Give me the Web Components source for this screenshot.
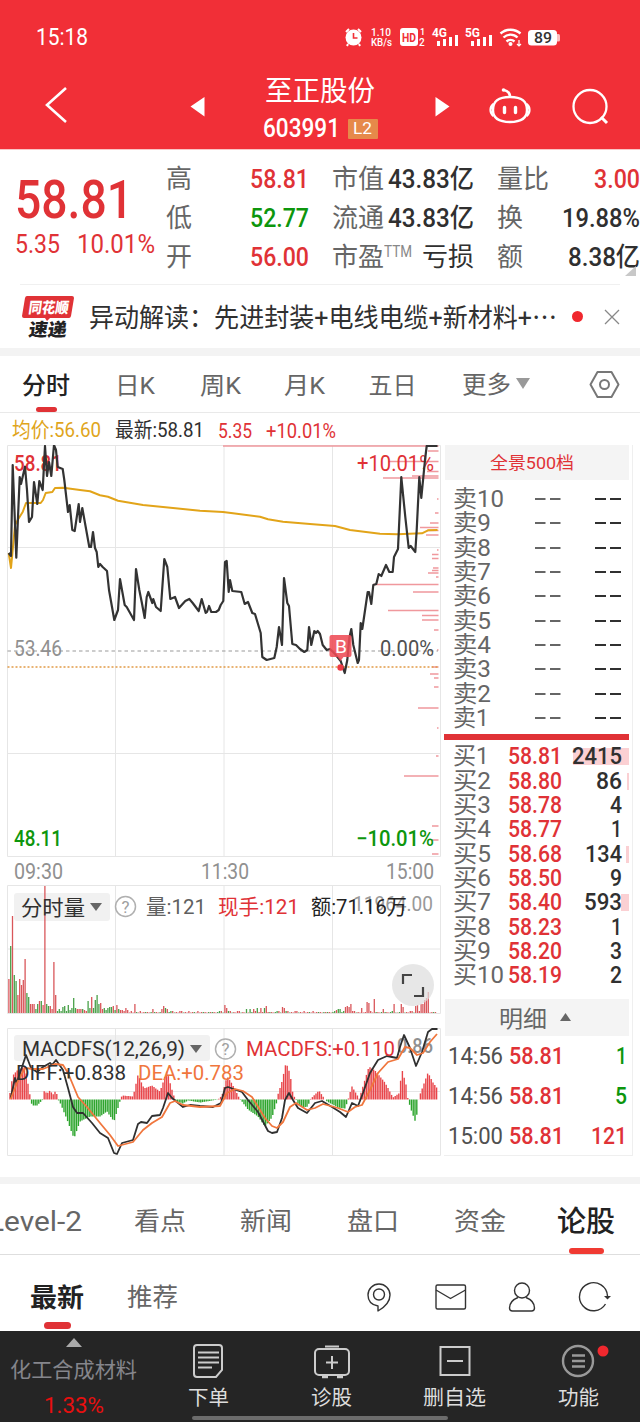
<!DOCTYPE html>
<html lang="zh-CN">
<head>
<meta charset="utf-8">
<title>至正股份 603991</title>
<style>
    body {
        margin: 0;
        width: 640px;
        background: #fff;
        color: #303030;
        font-family: Roboto, "Noto Sans CJK SC", sans-serif;
        overflow-x: hidden;
    }
</style>
</head>
<body>
<stock-page></stock-page>

<template id="page-tmpl">
    <style>
        :host {
            display: block;
            width: 640px;
            height: 1422px;
            overflow: hidden;
        }

        .split {
            height: 8px;
            background: #f3f3f3;
        }

        .split--low {
            height: 7px;
            margin-top: 21px;
        }

        .main {
            display: grid;
            grid-template-columns: 444px 189px;
            height: 743px;
        }

        .main order-book {
            border-right: 1px solid #efefef;
            margin-top: 32px;
        }
    </style>
    <stock-header></stock-header>
    <quote-panel></quote-panel>
    <news-bar></news-bar>
    <div class="split"></div>
    <period-tabs></period-tabs>
    <div class="main">
        <chart-stack></chart-stack>
        <order-book></order-book>
    </div>
    <div class="split split--low"></div>
    <section-tabs></section-tabs>
    <post-filter></post-filter>
    <bottom-nav></bottom-nav>
</template>

<template id="header-tmpl">
    <style>
        :host {
            display: block;
            height: 149px;
            background: #f12f37;
            border-bottom: 1px solid #f9c5c5;
            color: #fff;
        }

        .status {
            display: flex;
            height: 74px;
            align-items: center;
            padding-left: 36px;
        }

        .status svg {
            margin-left: 256px;
        }

        .nav {
            display: grid;
            grid-template-columns: 168px 60px 184px 60px 80px 88px;
            height: 75px;
        }

        .nav > svg {
            display: block;
        }

        .title {
            display: flex;
            flex-direction: column;
            align-items: center;
            padding-top: 4px;
        }

        .code {
            display: flex;
            align-items: center;
            gap: 8px;
            margin-top: 10px;
        }

        .l2 {
            display: flex;
            justify-content: center;
            width: 30px;
            height: 20px;
            align-items: center;
            background: #e6894a;
            border-radius: 1px;
        }
    </style>
    <div class="status">
        <fit-text w="52" size="23">15:18</fit-text>
        <svg width="218" height="24" viewBox="344 25 218 24" fill="#fff" font-family="Roboto" font-weight="500">
            <circle cx="353.500" cy="37.500" r="8"/>
            <path d="M346 32l3-3M361 32l-3-3M348 44l-1 2M359 44l1 2" stroke="#fff" stroke-width="2"/>
            <path d="M353.500 33v5h4" fill="none" stroke="#f12f37" stroke-width="1.600"/>
            <text x="371" y="36" font-size="10" textLength="20" lengthAdjust="spacingAndGlyphs">1.10</text>
            <text x="371" y="46" font-size="10" textLength="21" lengthAdjust="spacingAndGlyphs">KB/s</text>
            <rect x="400" y="28" width="18" height="18" rx="3"/>
            <text x="402" y="42" font-size="12" font-weight="700" fill="#f12f37" textLength="14" lengthAdjust="spacingAndGlyphs">HD</text>
            <text x="420" y="35" font-size="9">1</text>
            <text x="419" y="46" font-size="10">2</text>
            <text x="432" y="37" font-size="12" font-weight="700" textLength="15" lengthAdjust="spacingAndGlyphs">4G</text>
            <path d="M437 41h3v5h-3zM443 39h3v7h-3zM449 37h3v9h-3zM455 35h3v11h-3z"/>
            <text x="465" y="37" font-size="12" font-weight="700" textLength="15" lengthAdjust="spacingAndGlyphs">5G</text>
            <path d="M471 41h3v5h-3zM477 39h3v7h-3zM483 37h3v9h-3zM489 35h3v11h-3z"/>
            <path d="M500.500 33.500a15 15 0 0 1 20 0M503.500 37.500a10 10 0 0 1 14 0M506.500 41.500a6 6 0 0 1 8 0" fill="none" stroke="#fff" stroke-width="2.400"/>
            <circle cx="510.500" cy="44" r="2"/>
            <path d="M519 40v6M517 44l2 2 2-2" fill="none" stroke="#fff" stroke-width="1.200"/>
            <rect x="528" y="30" width="29" height="15.500" rx="3.500"/>
            <rect x="556" y="34" width="4" height="7.500" rx="1.500" opacity=".7"/>
            <text x="534" y="43" font-size="15" fill="#333" textLength="18" lengthAdjust="spacingAndGlyphs">89</text>
        </svg>
    </div>
    <div class="nav">
        <svg width="168" height="75" viewBox="0 74 168 75"><path d="M66 88L47 105l19 17" fill="none" stroke="#fff" stroke-width="2.600"/></svg>
        <svg width="60" height="75" viewBox="168 74 60 75"><path d="M204.500 97v19.500L190.500 106.500z" fill="#fff"/></svg>
        <div class="title">
            <fit-text w="110" size="28">至正股份</fit-text>
            <div class="code">
                <fit-text w="77" size="25" weight="500">603991</fit-text>
                <span class="l2"><fit-text w="19" size="17">L2</fit-text></span>
            </div>
        </div>
        <svg width="60" height="75" viewBox="412 74 60 75"><path d="M435.500 97v19.500L449.500 106.500z" fill="#fff"/></svg>
        <svg width="80" height="75" viewBox="472 74 80 75" fill="none" stroke="#fff" stroke-width="2.400">
            <path d="M510 97c-13 0-17 5-17 13s5 12 17 12 17-4 17-12-4-13-17-13z"/>
            <path d="M493.500 104c-4 3-4 9 0 12M526.500 104c4 3 4 9 0 12" stroke-width="2.200"/>
            <path d="M510 97c0-4-2-6-6-7" stroke-width="2.600"/>
            <circle cx="503.500" cy="90" r="1.800" fill="#fff" stroke="none"/>
            <path d="M504.500 107.500v5M515.500 107.500v5" stroke-width="3.400" stroke-linecap="round"/>
        </svg>
        <svg width="88" height="75" viewBox="552 74 88 75" fill="none" stroke="#fff" stroke-width="2.300">
            <circle cx="590" cy="106.500" r="16.500"/>
            <path d="M601 117l6 6" stroke-width="3"/>
        </svg>
    </div>
</template>

<template id="quote-tmpl">
    <style>
        :host {
            display: grid;
            grid-template-columns: 166px 166px 165px 143px;
            height: 134px;
            position: relative;
        }

        .price {
            padding: 23px 0 0 15px;
        }

        .price fit-text {
            display: block;
        }

        .change {
            display: flex;
            gap: 17px;
            margin-top: 4px;
        }

        .col {
            display: grid;
            grid-template-rows: repeat(3, 39px);
            align-items: center;
            padding-top: 9px;
        }

        .row {
            display: flex;
            justify-content: space-between;
        }

        .row span {
            display: flex;
            align-items: flex-start;
        }

        .a { padding-right: 23px; }
        .b { padding-right: 23px; }

        .corner {
            position: absolute;
            right: 4px;
            bottom: 8px;
        }
    </style>
    <div class="price">
        <fit-text w="118" size="54" weight="500" color="#e03236">58.81</fit-text>
        <div class="change">
            <fit-text w="45" size="26" color="#e03236">5.35</fit-text>
            <fit-text w="78" size="26" color="#e03236">10.01%</fit-text>
        </div>
    </div>
    <div class="col a"></div>
    <div class="col b"></div>
    <div class="col c"></div>
    <svg class="corner" width="11" height="10"><path d="M11 0v10H0z" fill="#c8c8c8"/></svg>
</template>

<template id="news-tmpl">
    <style>
        :host {
            display: flex;
            height: 63px;
            align-items: center;
            margin: 0 20px;
            border-top: 1px solid #f0f0f0;
        }

        .logo {
            margin: 1px 15px 0 2px;
            flex: none;
        }

        .headline {
            margin-top: 3px;
        }

        .dot {
            width: 11px;
            height: 11px;
            border-radius: 50%;
            background: #f0282e;
            margin: 0 21px 0 15px;
        }
    </style>
    <svg class="logo" width="52" height="46" viewBox="22 293 52 46" font-family="Noto Sans CJK SC" font-weight="900">
        <path d="M27 295h45q2 0 2 2l-3 18q-.500 2-2 2H50l-3 3-2-3H24q-2 0-2-2l3-18q.500-2 2-2z" fill="#e03236"/>
        <text transform="translate(28 312) skewX(-8)" font-size="15" fill="#fff" textLength="40" lengthAdjust="spacingAndGlyphs">同花顺</text>
        <text transform="translate(28 335) skewX(-8)" font-size="18" fill="#222" textLength="38" lengthAdjust="spacingAndGlyphs">速递</text>
    </svg>
    <fit-text class="headline" w="468" size="26">异动解读：先进封装+电线电缆+新材料+⋯</fit-text>
    <div class="dot"></div>
    <svg width="16" height="16"><path d="M1 1l14 14M15 1L1 15" stroke="#888" stroke-width="1.300"/></svg>
</template>

<template id="period-tmpl">
    <style>
        :host {
            display: grid;
            grid-template-columns: 92px 86px 84px 85px 91px 130px 72px;
            height: 56px;
            border-bottom: 1px solid #e9e9e9;
        }

        .tab {
            display: flex;
            flex-direction: column;
            align-items: center;
            padding-top: 18px;
            box-sizing: border-box;
        }

        .mark {
            width: 21px;
            height: 5px;
            border-radius: 3px;
            background: #e03236;
            margin-top: 9px;
        }

        .more {
            display: flex;
            align-items: center;
            justify-content: center;
            gap: 5px;
            padding: 2px 14px 0 0;
        }

        .more svg {
            margin-top: -3px;
        }
    </style>
    <div class="tab"><fit-text w="48" size="24" weight="500" color="#222">分时</fit-text><i class="mark"></i></div>
    <div class="tab"><fit-text w="40" size="24" color="#666">日K</fit-text></div>
    <div class="tab"><fit-text w="41" size="24" color="#666">周K</fit-text></div>
    <div class="tab"><fit-text w="41" size="24" color="#666">月K</fit-text></div>
    <div class="tab"><fit-text w="48" size="24" color="#666">五日</fit-text></div>
    <div class="more">
        <fit-text w="49" size="24" color="#666">更多</fit-text>
        <svg width="14" height="11"><path d="M0 0h14L7 11z" fill="#999"/></svg>
    </div>
    <svg width="72" height="56" viewBox="568 356 72 56" fill="none" stroke="#777" stroke-width="2">
        <path d="M597.500 372h14l7 12.500-7 12.500h-14l-7-12.500z" stroke-linejoin="round"/>
        <circle cx="604.500" cy="384.500" r="4.500"/>
    </svg>
</template>

<template id="charts-tmpl">
    <style>
        :host {
            display: block;
        }

        .legend {
            display: flex;
            height: 32px;
            align-items: center;
            padding: 3px 0 0 12px;
            box-sizing: border-box;
        }

        .legend fit-text + fit-text { margin-left: 14px; }

        .times {
            display: flex;
            justify-content: space-between;
            height: 28px;
            align-items: center;
            padding: 2px 10px 0 14px;
            box-sizing: border-box;
        }

        svg {
            display: block;
        }

        macd-chart {
            margin-top: 14px;
        }
    </style>
    <div class="legend">
        <fit-text w="89" size="21" color="#e0a51c">均价:56.60</fit-text>
        <fit-text w="89" size="21" color="#303030">最新:58.81</fit-text>
        <fit-text w="34" size="20" color="#e03236">5.35</fit-text>
        <fit-text w="70" size="20" color="#e03236">+10.01%</fit-text>
    </div>
    <price-chart></price-chart>
    <div class="times">
        <fit-text w="49" size="22" color="#909090">09:30</fit-text>
        <fit-text w="48" size="22" color="#909090">11:30</fit-text>
        <fit-text w="48" size="22" color="#909090">15:00</fit-text>
    </div>
    <volume-chart></volume-chart>
    <macd-chart></macd-chart>
</template>

<template id="book-tmpl">
    <style>
        :host {
            display: block;
            height: 710px;
            border-bottom: 1px solid #efefef;
        }

        .head {
            display: flex;
            align-items: center;
            justify-content: center;
            width: 185px;
            height: 35px;
            padding: 2px 10px 0 0;
            background: #f4f4f4;
            border-left: 1px solid #fff;
            box-sizing: border-box;
            gap: 13px;
        }

        .head--ticks {
            height: 37px;
            margin-top: 11px;
            padding: 4px 4px 0 0;
        }

        .head--ticks svg {
            margin-top: -4px;
        }

        .asks {
            padding-top: 7px;
        }

        .line {
            display: grid;
            grid-template-columns: 55px 54px 1fr;
            align-items: center;
            width: 185px;
            height: 24.330px;
            padding-left: 9px;
            padding-right: 7px;
            box-sizing: border-box;
            position: relative;
        }

        .line > :last-child {
            justify-self: end;
        }

        /* quantity bar behind the number */
        .line .bar {
            position: absolute;
            right: 0;
            top: 4px;
            height: 17px;
            background: #fbd0d3;
            z-index: -1;
        }

        .rule {
            height: 6px;
            width: 185px;
            background: #e03236;
            margin: 4px 0;
        }

        .ticks {
            padding-top: 1px;
        }

        .tick {
            display: grid;
            grid-template-columns: 61px 60px 1fr;
            align-items: center;
            width: 183px;
            height: 39.700px;
            padding-left: 4px;
            box-sizing: border-box;
        }

        .tick > :last-child {
            justify-self: end;
        }
    </style>
    <div class="head"><fit-text w="84" size="17" color="#e03236">全景500档</fit-text></div>
    <div class="asks"></div>
    <div class="rule"></div>
    <div class="bids"></div>
    <div class="head head--ticks">
        <fit-text w="48" size="23" color="#666">明细</fit-text>
        <svg width="11" height="8"><path d="M5.500 0L11 8H0z" fill="#666"/></svg>
    </div>
    <div class="ticks"></div>
</template>

<template id="sections-tmpl">
    <style>
        :host {
            display: flex;
            height: 71px;
            border-bottom: 1px solid #dedede;
            box-sizing: border-box;
        }

        .tab {
            display: flex;
            flex-direction: column;
            align-items: center;
            width: 106.600px;
            flex: none;
            padding-top: 25px;
            box-sizing: border-box;
        }

        /* scrolled partly out on the left */
        .tab--cut {
            align-items: flex-end;
            padding-right: 25px;
        }

        .tab--on { padding-top: 24px; }

        .mark {
            width: 35px;
            height: 7px;
            border-radius: 4px;
            background: #f03a32;
            margin-top: 11px;
        }
    </style>
    <div class="tab tab--cut"><fit-text w="94" size="27" color="#666">Level-2</fit-text></div>
    <div class="tab"><fit-text w="52" size="25" color="#666">看点</fit-text></div>
    <div class="tab"><fit-text w="52" size="25" color="#666">新闻</fit-text></div>
    <div class="tab"><fit-text w="52" size="25" color="#666">盘口</fit-text></div>
    <div class="tab"><fit-text w="52" size="25" color="#666">资金</fit-text></div>
    <div class="tab tab--on"><fit-text w="58" size="29" weight="500" color="#222">论股</fit-text><i class="mark"></i></div>
</template>

<template id="filter-tmpl">
    <style>
        :host {
            display: flex;
            justify-content: space-between;
            height: 76px;
            box-sizing: border-box;
        }

        .tabs {
            display: flex;
            gap: 43px;
            padding: 30px 0 0 30px;
        }

        .on {
            display: flex;
            flex-direction: column;
            align-items: center;
        }

        .mark {
            width: 27px;
            height: 7px;
            border-radius: 4px;
            background: #e03236;
            margin-top: 11px;
        }
    </style>
    <div class="tabs">
        <div class="on"><fit-text w="54" size="26" weight="700" color="#222">最新</fit-text><i class="mark"></i></div>
        <fit-text w="51" size="25" color="#666">推荐</fit-text>
    </div>
    <svg width="290" height="76" viewBox="350 1255 290 76" fill="none" stroke="#333" stroke-width="1.400" stroke-linejoin="round">
        <path d="M378 1311v-5c-6-1-10-5-10-11a11 11 0 0 1 22 0c0 6-5 12-12 16z"/>
        <circle cx="379" cy="1294.500" r="5.500"/>
        <rect x="436" y="1285" width="29.500" height="24" rx="1.500"/>
        <path d="M436 1290l14.500 8.500 15-8.500"/>
        <ellipse cx="522" cy="1290.500" rx="7.500" ry="7.500"/>
        <path d="M518 1297.500c-5 2-8.500 6-8.500 10.500q0 3 3 3h19q3 0 3-3c0-4.500-3.500-8.500-8.500-10.500"/>
        <path d="M605.500 1304a14 14 0 1 1 2-8"/>
        <path d="M604 1296h7l-3.500 3.500z" fill="#333" stroke="none"/>
    </svg>
</template>

<template id="nav-tmpl">
    <style>
        :host {
            display: grid;
            grid-template-columns: 147px 123px 123px 123px 124px;
            height: 91px;
            background: #252525;
            position: relative;
        }

        .sector, .item {
            display: flex;
            flex-direction: column;
            align-items: center;
        }

        .sector {
            padding-top: 7px;
        }

        .sector fit-text:nth-of-type(1) { margin-top: 13px; }
        .sector fit-text:nth-of-type(2) { margin-top: 14px; }

        .item {
            padding-top: 12px;
            gap: 9px;
        }

        .item svg {
            overflow: visible;
        }

        .home {
            position: absolute;
            left: 192px;
            bottom: 2px;
            width: 256px;
            height: 4px;
            border-radius: 2px;
            background: #6c6c6c;
        }
    </style>
    <div class="sector">
        <svg width="16" height="9"><path d="M8 0l8 9H0z" fill="#aaa"/></svg>
        <fit-text w="127" size="21" color="#85868c">化工合成材料</fit-text>
        <fit-text w="60" size="22" color="#e80f0f">1.33%</fit-text>
    </div>
    <div class="item">
        <svg width="36" height="36" fill="none" stroke="#ccc" stroke-width="2">
            <path d="M6 2h22q3 0 3 3v22l-6 7H6q-3 0-3-3V5q0-3 3-3z"/>
            <path d="M7 9.500h21M7 14.500h21M7 19.500h21M7 24.500h14"/>
        </svg>
        <fit-text w="41" size="20" color="#ddd">下单</fit-text>
    </div>
    <div class="item">
        <svg width="36" height="36" fill="none" stroke="#ccc" stroke-width="2">
            <rect x="1" y="6" width="34" height="26" rx="4"/>
            <path d="M11 3.500h14M18 13v13M12 19.500h12"/>
            <path d="M8 34h6M23 34h6" stroke-width="2.500"/>
        </svg>
        <fit-text w="41" size="20" color="#ddd">诊股</fit-text>
    </div>
    <div class="item">
        <svg width="36" height="36" fill="none" stroke="#ccc" stroke-width="2">
            <rect x="3.500" y="4" width="29" height="28"/>
            <path d="M10 18h16"/>
        </svg>
        <fit-text w="63" size="20" color="#ddd">删自选</fit-text>
    </div>
    <div class="item">
        <svg width="36" height="36" fill="none" stroke="#999" stroke-width="2.400">
            <circle cx="18" cy="18" r="15"/>
            <path d="M12 12.500h13M12 18h13M12 23.500h13"/>
            <circle cx="43" cy="8" r="5.500" fill="#f0282e" stroke="none"/>
        </svg>
        <fit-text w="41" size="20" color="#ddd">功能</fit-text>
    </div>
    <div class="home"></div>
</template>

<script>
    // text squeezed or stretched to an exact width
    class FitText extends HTMLElement {
        connectedCallback() {
            const root = this.attachShadow({ mode: 'open' });
            const width = Number(this.getAttribute('w'));

            root.innerHTML = `
                <style>
                    :host {
                        display: inline-block;
                        flex: none;
                        width: ${width}px;
                        font-size: ${this.getAttribute('size')}px;
                        font-weight: ${this.getAttribute('weight') || 400};
                        color: ${this.getAttribute('color') || 'inherit'};
                        line-height: 1;
                        white-space: nowrap;
                    }
                    span {
                        display: inline-block;
                        transform-origin: 0 50%;
                    }
                </style>
                <span><slot></slot></span>`;

            const span = root.querySelector('span');
            span.style.transform = `scaleX(${width / span.getBoundingClientRect().width})`;
            this.style.height = span.offsetHeight + 'px';
        }
    }

    const fit = (text, w, size, color, weight = 400) =>
        `<fit-text w="${w}" size="${size}" color="${color}" weight="${weight}">${text}</fit-text>`;

    const label = (text, x, y, w, size, color, weight = 400) =>
        `<text x="${x}" y="${y}" font-size="${size}" fill="${color}" font-weight="${weight}" textLength="${w}" lengthAdjust="spacingAndGlyphs">${text}</text>`;

    const RED = '#e03236';
    const GREEN = '#0d960d';

    class TemplateElement extends HTMLElement {
        connectedCallback() {
            this.attachShadow({ mode: 'open' });
            this.render();
        }

        render() {
            const tmpl = document.getElementById(this.constructor.tmpl);
            this.shadowRoot.append(tmpl.content.cloneNode(true));
        }
    }

    class StockPage extends TemplateElement { static tmpl = 'page-tmpl'; }
    class StockHeader extends TemplateElement { static tmpl = 'header-tmpl'; }
    class NewsBar extends TemplateElement { static tmpl = 'news-tmpl'; }
    class PeriodTabs extends TemplateElement { static tmpl = 'period-tmpl'; }
    class ChartStack extends TemplateElement { static tmpl = 'charts-tmpl'; }
    class SectionTabs extends TemplateElement { static tmpl = 'sections-tmpl'; }
    class PostFilter extends TemplateElement { static tmpl = 'filter-tmpl'; }
    class BottomNav extends TemplateElement { static tmpl = 'nav-tmpl'; }

    class QuotePanel extends TemplateElement {
        static tmpl = 'quote-tmpl';

        render() {
            super.render();
            // label, label width, value, value width, colour, weight
            const cols = {
                a: [['高', 26, '58.81', 59, RED, 500], ['低', 26, '52.77', 59, GREEN, 500], ['开', 26, '56.00', 59, RED, 500]],
                b: [['市值', 52, '43.83亿', 86, '#303030', 500], ['流通', 52, '43.83亿', 86, '#303030', 500], ['市盈', 52, '亏损', 52, '#303030', 400]],
                c: [['量比', 52, '3.00', 46, RED, 500], ['换', 26, '19.88%', 78, '#303030', 500], ['额', 26, '8.38亿', 72, '#303030', 500]]
            };

            for (const key in cols) {
                this.shadowRoot.querySelector('.' + key).innerHTML = cols[key].map(([name, w1, value, w2, color, weight]) => `
                    <div class="row">
                        <span>${fit(name, w1, 26, '#666')}${name === '市盈' ? fit('TTM', 28, 16, '#888') : ''}</span>
                        ${fit(value, w2, 26, color, weight)}
                    </div>`).join('');
            }
        }
    }

    class OrderBook extends TemplateElement {
        static tmpl = 'book-tmpl';

        render() {
            super.render();
            const bids = [
                ['58.81', '2415', 50, 56], ['58.80', '86', 26, 2], ['58.78', '4', 12, 0], ['58.77', '1', 11, 0], ['58.68', '134', 37, 3],
                ['58.50', '9', 12, 0], ['58.40', '593', 38, 8], ['58.23', '1', 11, 0], ['58.20', '3', 12, 0], ['58.19', '2', 12, 0]
            ];
            const ticks = [['14:56', '1', GREEN, 11], ['14:56', '5', GREEN, 12], ['15:00', '121', RED, 36]];
            const nameWidth = n => n === 10 ? 51 : n === 1 ? 36 : 38;

            let asks = '';
            for (let n = 10; n > 0; n--) {
                asks += `<div class="line">${fit('卖' + n, nameWidth(n), 24, '#666')}
                    <svg width="54" height="4"><path d="M27 2h10.500M42 2h10.500" stroke="#666" stroke-width="2"/></svg>
                    <svg width="28" height="4"><path d="M1 2h11M16 2h11" stroke="#303030" stroke-width="2"/></svg></div>`;
            }
            this.shadowRoot.querySelector('.asks').innerHTML = asks;

            this.shadowRoot.querySelector('.bids').innerHTML = bids.map(([price, qty, w, bar], i) => `
                <div class="line"><i class="bar" style="width:${bar}px"></i>
                    ${fit('买' + (i + 1), nameWidth(i + 1), 24, '#666')}
                    ${fit(price, 54, 24, RED, 500)}
                    ${fit(qty, w, 24, '#303030', 500)}
                </div>`).join('');

            this.shadowRoot.querySelector('.ticks').innerHTML = ticks.map(([time, qty, color, w]) => `
                <div class="tick">${fit(time, 55, 24, '#505050')}${fit('58.81', 55, 24, RED, 500)}${fit(qty, w, 24, color, 500)}</div>`).join('');
        }
    }

    class ChartBase extends HTMLElement {
        connectedCallback() {
            this.attachShadow({ mode: 'open' }).innerHTML = `
                <style>
                    :host { display: block; }
                    svg { display: block; font-family: Roboto, "Noto Sans CJK SC", sans-serif; }
                </style>
                <svg width="442" height="${this.h}" viewBox="0 ${this.top} 442 ${this.h}">${this.draw()}</svg>`;
        }

        grid(rows) {
            const bottom = this.top + this.h - 1;
            return `<path d="M7.500 ${this.top + .5}H440.500V${bottom + .5}H7.500zM115.500 ${this.top}V${bottom}M224 ${this.top}V${bottom}M332.500 ${this.top}V${bottom}
                ${rows.map(y => `M7.500 ${y}H440`).join('')}" fill="none" stroke="#e6e6e6"/>`;
        }

        line(points, color, width = 2) {
            return `<polyline points="${points}" fill="none" stroke="${color}" stroke-width="${width}" stroke-linejoin="round"/>`;
        }
    }

    class PriceChart extends ChartBase {
        top = 445;
        h = 412;

        draw() {
            const price = `8.700,553 11,556 12.700,465 16.300,557.700 19.700,477 21,484 25,466.700 27,490 29,522 32,517 34,482 37.300,504 39.300,481 42.700,490 45,446 47,476 49,462 51.300,476 54,445 56,450 57.700,467 62.700,469 64.300,480 68,512 69.700,505 72.300,530 74.700,531 78.700,504 80,522 82.300,508 89.300,547 91,547 93,532 95,548 96.700,552 98.300,567 100,564 102.700,567 107,571 109,590 114.300,620 118,610 120,579 124.700,605 126.700,607 134,620 136,569 139.300,590 141.700,602 144.700,618 146.700,597 148.300,592 152.300,603 153.300,599 156,607 160.700,611 164.300,559 167.300,567 170.300,599 175,597 179,608 185.300,601 189.300,599 192.700,603 198.700,611 201.700,599 205.700,613 207,612 209,606 211.300,612 216,612 218.700,610 220.700,605 223.300,601 225,562 226.700,561 228.700,592 230,580 232.300,591 241.300,592 244.700,604 248,602 252.300,613 255,614 260.700,633 262.300,657 266.700,660 274.300,658 276.700,647 279,627 282,645 284,578 287.300,603 289,606 292.300,644 296,645 300,649 304.300,652 307.300,650 309,627 311.300,645 314.300,631 316,633 317.700,631 320,634 322.700,645 326.700,650 330,649 335,654 340.700,661 344.700,673 347.300,660 349.300,638 351.300,629 353.300,645 357.700,663 359,660 360.700,623 362.300,629 367.700,592 369,592 371.300,604 373.300,585 376.300,584 378.700,574 381.300,576 386,565 389.300,572 392.700,572 394,557 398,549 401.300,477 405.300,517 408.700,548 410.700,546 415.300,552 416.700,530 419.300,477 421.300,498 425,460 426.700,446 437.500,446`;
            const avg = `8.700,553 11,568 12.700,550 15,525 18.300,519 22.700,512 26,503 40.700,503 43,500 45.700,493 52.300,492 55,488 63.300,487.700 80,490 90,491.300 100,495.300 108,496.700 118,500.700 143,505 173,508 200,510.700 223,512 233,513.300 260,516.700 268,519.300 283,521.700 310,524 335,526 350,530 380,533.700 397,534.300 422,533.300 428,530.300 437.500,530`;
            // price levels by traded volume: y, left edge
            const levels = [[446, 223], [451, 428], [461.500, 388], [471.500, 427], [476, 412], [478, 383], [499, 437], [513, 435], [523, 430], [527.500, 420], [530.500, 427], [535, 426], [550, 437], [554.500, 432], [558.500, 432], [568, 433], [570.500, 432], [573, 428], [577, 436], [584.500, 373], [592, 413], [610.500, 388], [615.500, 422], [620, 422], [630, 434], [650, 437], [667, 432], [674, 430], [678, 434], [687, 434], [708, 418], [728, 437], [756, 436], [776, 404], [826, 432], [840, 432], [854, 432]];

            return this.grid([547.5, 753.5])
                + `<path d="${levels.map(([y, x]) => `M${x} ${y}H438.500`).join('')}" stroke="#f0989d" stroke-width="1.500"/>`
                + `<path d="M7.500 651H438" stroke="#999" stroke-dasharray="3.500 3"/>`
                + `<path d="M7.500 667H438" stroke="#e29a45" stroke-width="1.500" stroke-dasharray="2 2"/>`
                + label('58.81', 14, 471, 48, 21.5, RED, 500)
                + label('53.46', 14, 656, 48, 21.5, '#909090')
                + label('48.11', 14, 846, 48, 21.5, GREEN, 500)
                + label('−10.01%', 356, 846, 78, 21.5, GREEN, 500)
                + label('+10.01%', 357, 471, 77, 21.5, RED)
                + this.line(avg, '#e2a419')
                + this.line(price, '#333', 2.2)
                + label('0.00%', 380, 656, 54, 21.5, '#505050')
                + `<path d="M331.500 635h18q2 0 2 2v18q0 2-2 2h-6l-3 4-3-4h-6q-2 0-2-2v-18q0-2 2-2z" fill="#ee4b55" fill-opacity=".88"/>
                   <circle cx="340.500" cy="667.500" r="3.200" fill="#ee3b45"/>`
                + label('B', 335, 653, 12, 18, '#fff');
        }
    }

    class VolumeChart extends ChartBase {
        top = 885;
        h = 129;

        draw() {
            // one bar a minute, negative for a falling minute
            const open = [34, -67, 97, -38, -32, 18, 34, 28, 33, 54, -20, -16, 9, 9, 9, -4, -9, 12, -12, 8, 127, -9, -7, 7, 4, 51, 18, -2, -4, -2, -6, -7, -2, -8, -3, -5, -15, -5, 4, 4, 4, -4, 3, 2, -12, -5, 16, -5, -13, -18, -9, 10, 4, -5, -3, -5, -6, -6, 7, -3, 8];
            const quiet = [2, -1, 1, .5, 2, -2, 1, -.5, 1, .5, -1, .5];
            const peaks = { 61: -4, 62: 3, 63: 3, 65: 5, 66: 3, 70: 9, 80: 4, 85: 4, 86: 7, 87: -5, 88: 4, 120: 8, 121: 5, 132: -4, 134: -4, 136: 4, 138: -5, 140: 5, 142: -5, 143: 7, 152: 6, 153: 5, 182: 3, 183: -4, 184: -4, 187: 6, 188: 7, 189: 6, 190: 9, 196: 5, 199: 11, 200: 10, 203: 14, 208: 4, 214: 9, 218: 9, 219: 6, 226: 7, 227: 8, 229: 9, 230: 9, 231: 13, 232: 15, 233: 21 };
            let bars = '';

            for (let i = 0; i < 238; i++) {
                const v = open[i] || peaks[i] || quiet[(i * 7 + (i >> 3)) % 12];
                bars += `<path d="M${(8.9 + i * 1.8).toFixed(1)} 1013v${-Math.abs(v)}" stroke="${v > 0 ? '#d9565a' : '#48a048'}" stroke-width="1.300"/>`;
            }

            return `<rect x="14" y="893" width="96" height="28" rx="3" fill="#f1f1f1"/>`
                + this.grid([949]) + bars
                + label('分时量', 21, 914.5, 64, 21, '#303030')
                + `<path d="M90 903h12l-6 8z" fill="#666"/>
                   <circle cx="125.500" cy="906.500" r="10" fill="none" stroke="#b0b0b0" stroke-width="1.500"/>`
                + label('?', 121.5, 912.5, 8, 16, '#a0a0a0')
                + label('量:121', 146, 914, 60, 21, '#606060')
                + label('现手:121', 218, 914, 81, 21, RED)
                + label('11964.00', 353, 911, 80, 21, '#999')
                + label('额:71.16万', 311, 914, 96, 21, '#222')
                + `<circle cx="413" cy="985" r="21" fill="#dedede" fill-opacity=".72"/>
                   <path d="M403 984v-9h9M414 996h9v-9" fill="none" stroke="#444" stroke-width="2.200"/>`;
        }
    }

    class MacdChart extends ChartBase {
        top = 1028;
        h = 128;

        draw() {
            // histogram envelope: x, height above the zero line
            const env = [[9, 0], [12.7, 24], [17, 29], [25, 33], [29, 10], [30.700, 0], [32, -6], [37, -6], [43, 0], [44.300, 9], [47, 6], [50, 9], [53, 5], [56, 9], [58, 0], [60, -3], [67, -20], [74, -39], [80, -22], [90, -17], [100, -17], [107, -12], [114, -22], [119, -5], [120.500, 0], [122, 4], [133, 3], [135, 11], [138, 25], [144, 11], [152, 14], [160, 8], [167, 29], [171, 13], [175, 0], [177, -2], [183, -4], [188, -1], [200, -3], [218, 0], [222, 4], [227, 23], [232, 16], [240, 0], [242, -2], [248, -10], [258, -17], [265, -27], [272, -18], [277, -2], [278, 5], [282, 18], [286, 37], [290, 26], [293, 5], [296, 0], [297, -3], [302, -8], [308, -7], [310, 0], [313, 3], [319, 9], [323, 3], [325, 0], [327, -2], [338, -8], [345, -9], [348, -1], [349, 4], [352, 13], [358, 3], [359, 0], [362, 10], [365, 20], [369, 33], [375, 29], [385, 17], [393, 2], [399, 6], [402, 30], [406, 15], [408, 0], [411, -10], [416, -24], [418, -2], [420, 5], [428, 27], [433, 17], [438, 10]];
            const diff = `10.700,1098 15,1078 16.700,1083 26,1055 31,1068 37,1072 43,1067 50,1063 52,1065 56,1060 63,1070 68,1088 73,1107 77,1113 83,1113 92,1123 100,1133 108,1138 114,1153 117,1154 122,1143 133,1140 138,1124 141,1122 147,1123 152,1116 160,1115 163,1108 168,1093 172,1098 183,1107 190,1105 200,1106 213,1107 221,1103 225,1088 228,1087 242,1092 248,1100 258,1112 268,1131 272,1133 277,1132 282,1118 285,1100 289,1093 293,1100 298,1108 307,1113 315,1103 322,1101 332,1107 340,1112 346,1117 352,1103 358,1106 363,1093 370,1073 378,1060 387,1056 397,1058 400,1047 404,1035 410,1048 416,1066 422,1052 428,1032 432,1029 437.500,1029`;
            const dea = `10.700,1099 17,1083 25,1068 33,1069 43,1069 55,1064 63,1065 68,1073 78,1097 87,1107 100,1123 110,1135 118,1146 133,1142 143,1130 152,1123 162,1117 170,1103 175,1101 183,1105 200,1107 220,1106 227,1093 235,1089 243,1091 252,1097 265,1118 272,1126 277,1128 283,1122 290,1107 296,1103 307,1110 315,1108 323,1104 338,1108 348,1112 355,1107 362,1105 370,1090 378,1073 388,1062 398,1059 405,1047 410,1048 417,1055 423,1053 430,1042 437,1034`;
            let bars = '';
            let k = 0;

            for (let x = 10; x < 438; x += 1.8) {
                while (k < env.length - 2 && env[k + 1][0] < x) k++;
                const [x0, y0] = env[k];
                const [x1, y1] = env[k + 1];
                const v = y0 + (y1 - y0) * (x - x0) / (x1 - x0);
                bars += `<path d="M${x.toFixed(1)} 1099.500v${(-v).toFixed(1)}" stroke="${v > 0 ? '#e8454a' : '#2da52d'}" stroke-width="1.400"/>`;
            }

            return `<rect x="14" y="1035" width="196" height="26" rx="3" fill="#f1f1f1"/>`
                + this.grid([1091.5]) + bars
                + label('0.86', 397, 1053, 36, 21, '#909090', 500)
                + this.line(diff, '#303030', 1.8) + this.line(dea, '#f0763d', 1.8)
                + label('MACDFS(12,26,9)', 22, 1056, 163, 21, '#303030')
                + `<path d="M190 1045h12l-6 8z" fill="#666"/>
                   <circle cx="225.500" cy="1049" r="10" fill="none" stroke="#b0b0b0" stroke-width="1.500"/>`
                + label('?', 221.5, 1055, 8, 16, '#a0a0a0')
                + label('MACDFS:+0.110', 246, 1056, 149, 21, RED)
                + label('DIFF:+0.838', 16, 1080, 110, 21, '#303030')
                + label('DEA:+0.783', 138, 1080, 106, 21, '#f0763d');
        }
    }

    customElements.define('fit-text', FitText);
    customElements.define('price-chart', PriceChart);
    customElements.define('volume-chart', VolumeChart);
    customElements.define('macd-chart', MacdChart);
    customElements.define('stock-header', StockHeader);
    customElements.define('quote-panel', QuotePanel);
    customElements.define('news-bar', NewsBar);
    customElements.define('period-tabs', PeriodTabs);
    customElements.define('chart-stack', ChartStack);
    customElements.define('order-book', OrderBook);
    customElements.define('section-tabs', SectionTabs);
    customElements.define('post-filter', PostFilter);
    customElements.define('bottom-nav', BottomNav);
    customElements.define('stock-page', StockPage);
</script>
</body>
</html>
